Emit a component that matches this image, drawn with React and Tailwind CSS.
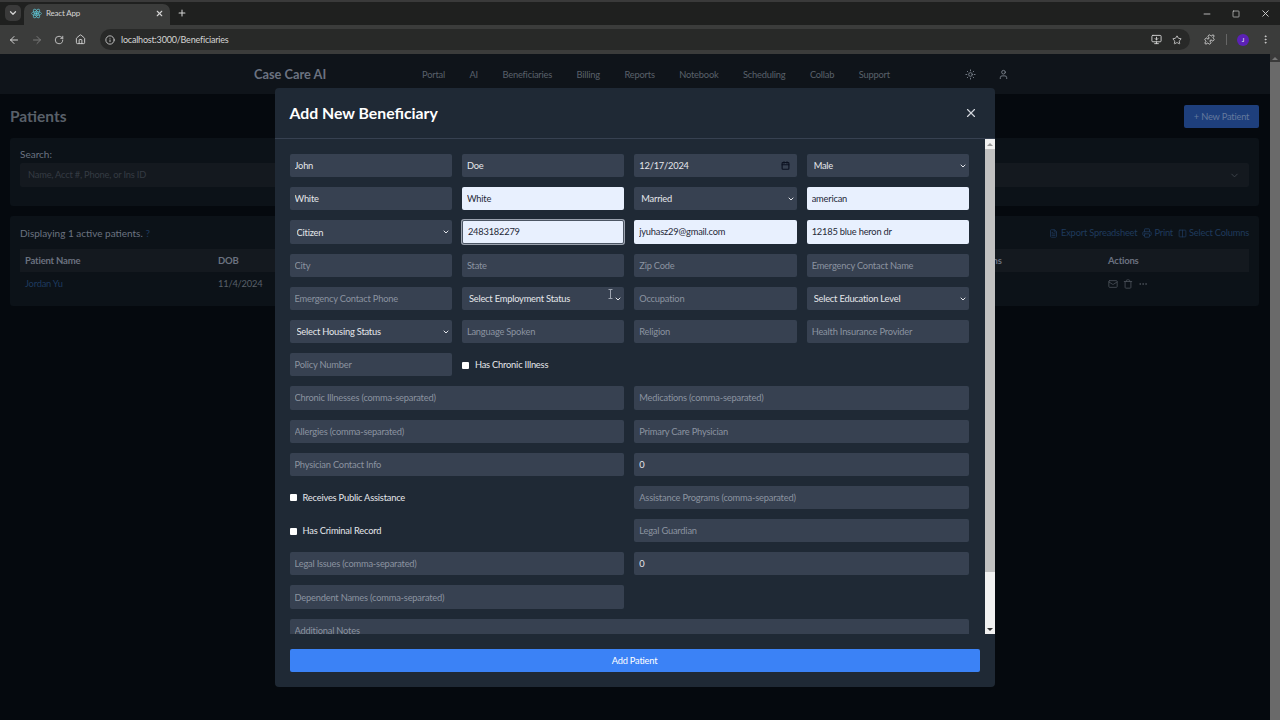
import {
  ArrowLeft, ArrowRight, RotateCw, Home, Info, X, Plus, ChevronDown, Minus, Square, MonitorDown, Star,
  Puzzle, MoreVertical, Sun, User, FileText, Printer, Columns2, Mail, Trash, MoreHorizontal, Calendar,
} from 'lucide-react';

const navItems = ['Portal', 'AI', 'Beneficiaries', 'Billing', 'Reports', 'Notebook', 'Scheduling', 'Collab', 'Support'];

const inputClass = 'h-[23.2px] w-full rounded-[2px] bg-[#374151] px-[5px] text-[#e5e7eb] placeholder-[#8b93a0] outline-none';
const filledClass = 'h-[23.2px] w-full rounded-[2px] bg-[#e8f0fe] px-[5px] text-[#1f2937] outline-none';

function Field({ placeholder, value, span }) {
  return (
    <input type="text" readOnly placeholder={placeholder} value={value ?? ''} className={`${inputClass} ${span ?? ''}`} />
  );
}

function Filled({ value, focused }) {
  return (
    <input
      type="text"
      readOnly
      value={value}
      className={`${filledClass} ${focused ? 'ring-1 ring-[#9ca3af] border border-[#4b5563]' : ''}`}
    />
  );
}

function DateField({ value }) {
  return (
    <div className="relative h-[23.2px] w-full">
      <input type="text" readOnly value={value} className={inputClass} />
      <Calendar size={9} strokeWidth={3} className="absolute right-[7px] top-[7px] text-[#0b1120]" />
    </div>
  );
}

function Select({ value }) {
  return (
    <div className="relative h-[23.2px] w-full">
      <select defaultValue={value} className="h-full w-full appearance-none rounded-[2px] bg-[#374151] pl-[7px] pt-[1px] text-[#e5e7eb] outline-none">
        <option>{value}</option>
      </select>
      <ChevronDown size={8} strokeWidth={3} className="absolute right-[2px] top-[8px] text-[#e5e7eb]" />
    </div>
  );
}

function Check({ label, span }) {
  return (
    <label className={`flex h-[23.2px] items-center gap-[6px] pt-[1px] text-[#e5e7eb] ${span ?? ''}`}>
      <input type="checkbox" readOnly className="h-[7px] w-[7px] m-0 appearance-none rounded-[1px] bg-white" />
      {label}
    </label>
  );
}

function ChromeBar() {
  return (
    <div className="shrink-0 text-[#d4d4d4]">
      <div className="flex h-[25px] items-end border-t-2 border-[#3a3a3a] bg-[#1f201f]">
        <div className="mb-[4px] ml-[5px] flex h-[16px] w-[16px] items-center justify-center rounded-[5px] bg-[#3a3a3a]">
          <ChevronDown size={10} strokeWidth={3} />
        </div>
        <div className="ml-[3px] flex h-[21px] w-[146px] items-center rounded-t-[7px] bg-[#3b3c3b] pb-[3px] pl-[7px] pr-[6px]">
          <svg width="11" height="11" viewBox="-12 -11 24 22" fill="none" stroke="#5fc8d8" strokeWidth="1.4">
            <circle r="2" fill="#5fc8d8" />
            <ellipse rx="11" ry="4.2" />
            <ellipse rx="11" ry="4.2" transform="rotate(60)" />
            <ellipse rx="11" ry="4.2" transform="rotate(120)" />
          </svg>
          <span className="ml-[4px] flex-1 text-[8px]">React App</span>
          <X size={9} strokeWidth={3} />
        </div>
        <Plus size={10} strokeWidth={2.5} className="mb-[7px] ml-[7px]" />
        <div className="mb-[6px] ml-auto flex items-center gap-[20px] pr-[9px]">
          <Minus size={10} />
          <Square size={8} />
          <X size={11} />
        </div>
      </div>
      <div className="flex h-[29px] items-start bg-[#3b3c3b] pt-[4px]">
        <div className="flex h-[21px] w-[100px] items-center gap-[11px] pl-[8px]">
          <ArrowLeft size={12} />
          <ArrowRight size={12} className="text-[#7a7a7a]" />
          <RotateCw size={10} />
          <Home size={11} />
        </div>
        <div className="flex h-[21px] w-[1090px] items-center rounded-full bg-[#282928] pl-[5px] pr-[8px]">
          <Info size={10} />
          <span className="ml-[6px] flex-1 text-[9px]">localhost:3000/Beneficiaries</span>
          <MonitorDown size={11} />
          <Star size={10} className="ml-[10px]" />
        </div>
        <div className="flex h-[21px] items-center">
          <Puzzle size={11} className="ml-[14px]" />
          <div className="ml-[11px] h-[11px] w-px bg-[#666]" />
          <div className="ml-[10px] flex h-[12px] w-[12px] items-center justify-center rounded-full bg-[#5b21b6] text-[6px] text-white">J</div>
          <MoreVertical size={11} className="ml-[11px]" />
        </div>
      </div>
    </div>
  );
}

function BackgroundPage() {
  return (
    <div className="flex min-w-0 flex-1 flex-col bg-[#05090e]">
      <header className="flex h-[40px] shrink-0 items-center bg-[#0f141a] pl-[254px] pt-[1px] text-[#5a616b]">
        <div className="w-[168px] text-[12.8px] font-bold tracking-normal text-[#6b7280]">Case Care AI</div>
        <nav className="flex gap-[24.5px] text-[9.3px]">
          {navItems.map((item) => (
            <span key={item}>{item}</span>
          ))}
        </nav>
        <Sun size={11} className="ml-[75px] text-[#7b828c]" />
        <User size={11} className="ml-[22px] text-[#7b828c]" />
      </header>
      <main className="flex flex-col pl-[10px] pr-[11px]">
        <div className="flex h-[44px] items-center justify-between pt-[1px]">
          <h1 className="text-[15.5px] font-bold tracking-normal text-[#596069]">Patients</h1>
          <button type="button" className="h-[23px] w-[75px] rounded-[2px] bg-[#1e3f7c] text-[9.3px] text-[#64799d]">+ New Patient</button>
        </div>
        <section className="h-[68px] rounded-[3px] bg-[#0c1218] px-[10px] pt-[10px]">
          <div className="mb-[2px] text-[10px] leading-[13px] tracking-normal text-[#6b7280]">Search:</div>
          <div className="flex h-[24px] items-center justify-between rounded-[2px] bg-[#14191f] pl-[8px] pr-[9px] text-[9.3px] text-[#353b43]">
            Name, Acct #, Phone, or Ins ID
            <ChevronDown size={11} className="text-[#3f454d]" />
          </div>
        </section>
        <section className="mt-[10px] h-[90px] rounded-[3px] bg-[#0c1218] px-[10px]">
          <div className="flex h-[33px] items-center pt-[1px] text-[10px] text-[#6b7280]">
            <span className="tracking-normal">Displaying 1 active patients. <span className="text-[#1e3a5f]">?</span></span>
            <div className="ml-auto flex items-center text-[9.3px] text-[#1f3a5c]">
              <FileText size={9} className="mr-[3px]" />Export Spreadsheet
              <Printer size={10} className="ml-[5px] mr-[2px]" />Print
              <Columns2 size={9} className="ml-[5px] mr-[2px]" />Select Columns
            </div>
          </div>
          <div className="flex h-[23px] items-center bg-[#14191f] pl-[5px] pt-[1px] text-[9.5px] font-bold text-[#6b7280]">
            <span className="w-[193px]">Patient Name</span>
            <span className="w-[740px]">DOB</span>
            <span className="w-[150px]">Conditions</span>
            <span>Actions</span>
          </div>
          <div className="flex h-[23px] items-center pl-[5px] text-[9.3px] text-[#596069]">
            <span className="w-[193px] text-[#1e3a5f]">Jordan Yu</span>
            <span className="w-[890px]">11/4/2024</span>
            <span className="flex items-center gap-[5px] text-[#4b5159]">
              <Mail size={10} />
              <Trash size={10} />
              <MoreHorizontal size={10} />
            </span>
          </div>
        </section>
      </main>
    </div>
  );
}

function AddModal() {
  return (
    <div className="absolute left-[275px] top-[88px] flex h-[599px] w-[720px] flex-col rounded-[4px] bg-[#1f2935] text-[9.3px]">
      <div className="flex h-[51px] shrink-0 items-center justify-between border-b border-[#374151] pl-[14.5px] pr-[17px]">
        <h2 className="text-[15.8px] font-bold tracking-normal text-white">Add New Beneficiary</h2>
        <X size={14} className="text-[#d1d5db]" />
      </div>
      <div className="flex min-h-0 flex-1">
        <div className="min-w-0 flex-1 overflow-hidden pl-[14.5px] pr-[16px] pt-[15px]">
          <form className="grid grid-cols-4 gap-x-[10px] gap-y-[10px]">
            <Field value="John" />
            <Field value="Doe" />
            <DateField value="12/17/2024" />
            <Select value="Male" />

            <Field value="White" />
            <Filled value="White" />
            <Select value="Married" />
            <Filled value="american" />

            <Select value="Citizen" />
            <Filled value="2483182279" focused />
            <Filled value="jyuhasz29@gmail.com" />
            <Filled value="12185 blue heron dr" />

            <Field placeholder="City" />
            <Field placeholder="State" />
            <Field placeholder="Zip Code" />
            <Field placeholder="Emergency Contact Name" />

            <Field placeholder="Emergency Contact Phone" />
            <Select value="Select Employment Status" />
            <Field placeholder="Occupation" />
            <Select value="Select Education Level" />

            <Select value="Select Housing Status" />
            <Field placeholder="Language Spoken" />
            <Field placeholder="Religion" />
            <Field placeholder="Health Insurance Provider" />

            <Field placeholder="Policy Number" />
            <Check label="Has Chronic Illness" span="col-span-3" />

            <Field placeholder="Chronic Illnesses (comma-separated)" span="col-span-2" />
            <Field placeholder="Medications (comma-separated)" span="col-span-2" />

            <Field placeholder="Allergies (comma-separated)" span="col-span-2" />
            <Field placeholder="Primary Care Physician" span="col-span-2" />

            <Field placeholder="Physician Contact Info" span="col-span-2" />
            <Field value="0" span="col-span-2" />

            <Check label="Receives Public Assistance" span="col-span-2" />
            <Field placeholder="Assistance Programs (comma-separated)" span="col-span-2" />

            <Check label="Has Criminal Record" span="col-span-2" />
            <Field placeholder="Legal Guardian" span="col-span-2" />

            <Field placeholder="Legal Issues (comma-separated)" span="col-span-2" />
            <Field value="0" span="col-span-2" />

            <Field placeholder="Dependent Names (comma-separated)" span="col-span-2" />
            <div className="col-span-2" />

            <Field placeholder="Additional Notes" span="col-span-4" />
          </form>
        </div>
        <div className="flex w-[10px] shrink-0 flex-col items-center bg-[#f1f1f1]">
          <div className="flex h-[10px] w-full items-center justify-center">
            <div className="h-0 w-0 border-x-[3px] border-b-[3px] border-x-transparent border-b-[#999]" />
          </div>
          <div className="h-[423px] w-full bg-[#c1c1c1]" />
          <div className="mt-auto flex h-[10px] w-full items-center justify-center">
            <div className="h-0 w-0 border-x-[3px] border-t-[3px] border-x-transparent border-t-[#333]" />
          </div>
        </div>
      </div>
      <div className="flex h-[53px] shrink-0 items-start pl-[14.5px] pr-[15.5px] pt-[15px]">
        <button type="button" className="h-[23px] w-full rounded-[2px] bg-[#3b82f6] text-white">Add Patient</button>
      </div>
    </div>
  );
}

function App() {
  return (
    <div className="relative flex h-[720px] w-[1280px] flex-col overflow-hidden bg-[#05090e] font-['Lato','Roboto',sans-serif] tracking-[-0.2px]">
      <ChromeBar />
      <div className="flex min-h-0 flex-1">
        <BackgroundPage />
        <div className="flex w-[10px] shrink-0 flex-col bg-[#3a3a3a]">
          <div className="flex h-[8px] items-center justify-center">
            <div className="h-0 w-0 border-x-[3px] border-b-[3px] border-x-transparent border-b-[#777]" />
          </div>
          <div className="flex-1 bg-[#6a6a6a]" />
        </div>
      </div>
      <AddModal />
      {/* mouse cursor caught in the screenshot */}
      <svg className="absolute left-[608px] top-[289px]" width="5" height="10" viewBox="0 0 5 10" fill="none" stroke="#9ca3af" strokeWidth="1">
        <path d="M0.5 0.5h4M2.5 0.5v9M0.5 9.5h4" />
      </svg>
    </div>
  );
}

export default App;
